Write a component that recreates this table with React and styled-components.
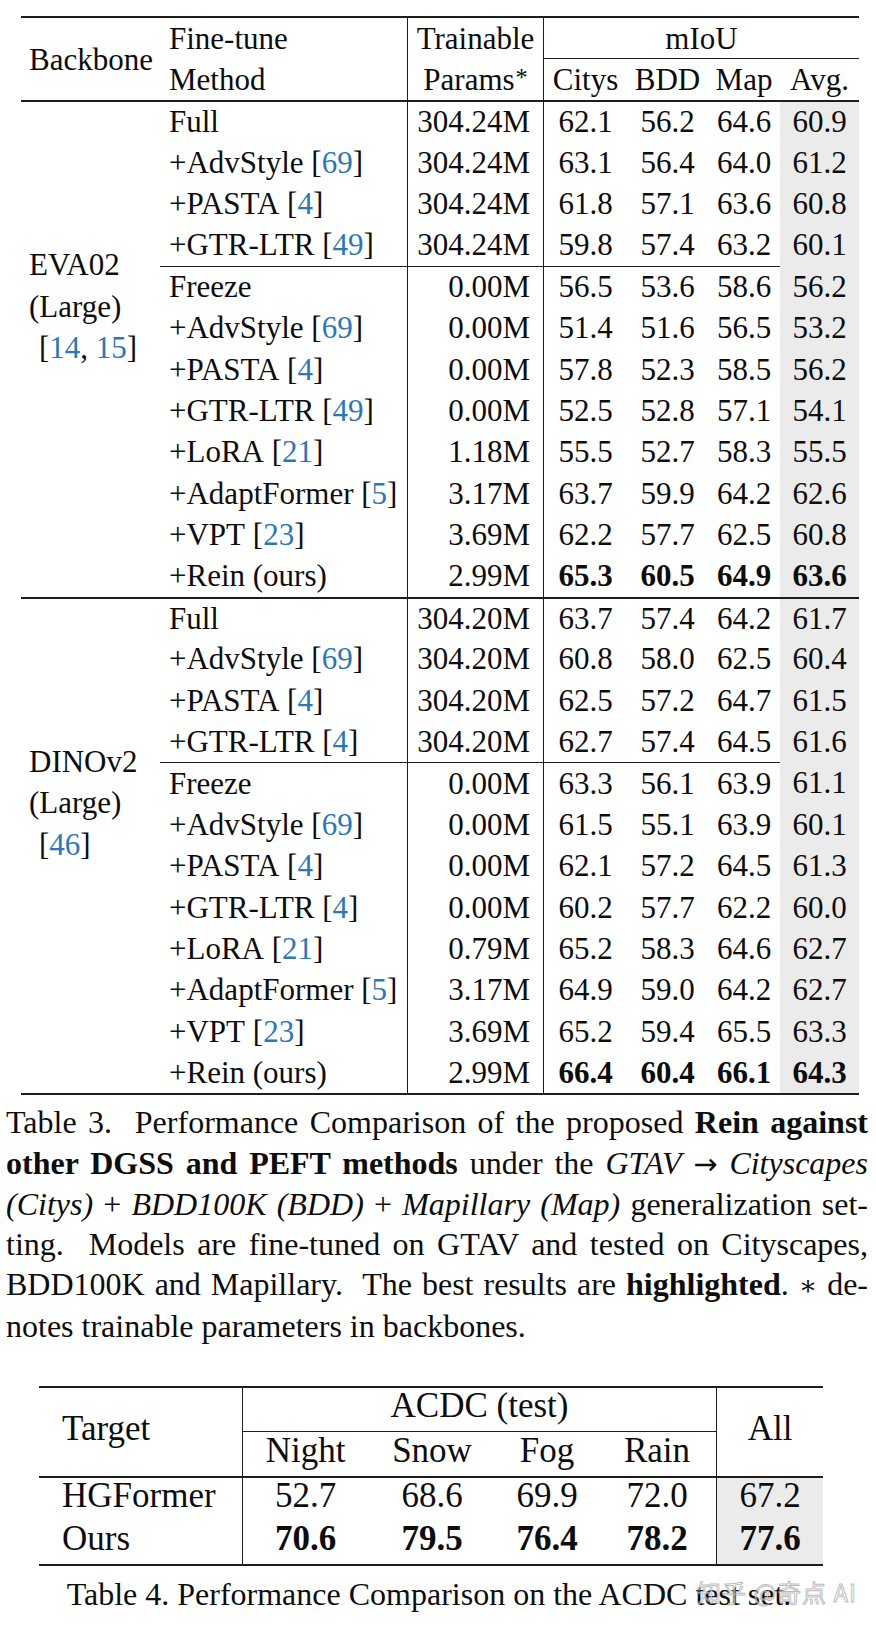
import React from 'react';
import styled, { createGlobalStyle, css } from 'styled-components';

const RULE = '#1e1e1e';
const SHADE = '#ebebeb';
const CITE = '#2c78b6';

const GlobalStyle = createGlobalStyle`
  html, body { margin: 0; padding: 0; background: #ffffff; }
  body {
    font-family: "Liberation Serif", "Times New Roman", serif;
    color: #0d0d0d;
  }
`;

const Page = styled.div`
  position: relative;
  width: 876px;
  min-height: 1630px;
  padding-top: 16px;
  box-sizing: border-box;
  overflow: hidden;
`;

/* ---------- Table 3 ---------- */

const ResultsTable = styled.div`
  display: grid;
  grid-template-columns: 139px 247px 136px 84px 81px 72px 79px;
  grid-template-rows: 41px 41px repeat(24, 41.4px);
  width: 838px;
  margin-left: 21px;
  border-top: 2px solid ${RULE};
  border-bottom: 2px solid ${RULE};
  font-size: 31px;
  line-height: 1;
`;

const BaseCell = styled.div`
  box-sizing: border-box;
  display: flex;
  align-items: center;
  white-space: nowrap;
  ${p => p.$rule === 'thick' && css`border-top: 2px solid ${RULE};`}
  ${p => p.$rule === 'thin' && css`border-top: 1px solid ${RULE};`}
  ${p => p.$vline && css`border-left: 1px solid ${RULE};`}
  ${p => p.$shade && css`background: ${SHADE};`}
  font-weight: ${p => (p.$bold ? 700 : 400)};
`;

const HeadCell = styled(BaseCell)`
  grid-column: ${p => p.$col};
  grid-row: ${p => p.$row};
  justify-content: ${p => (p.$left ? 'flex-start' : 'center')};
  padding-left: ${p => p.$pad || 0}px;
  ${p => p.$underline && css`border-bottom: 1px solid ${RULE};`}
`;

const Star = styled.sup`
  font-size: 0.78em;
  line-height: 0;
  position: relative;
  top: -0.05em;
  margin-left: 1px;
`;

const BackboneCell = styled(BaseCell)`
  grid-column: 1;
  grid-row: ${p => p.$start} / span 12;
  flex-direction: column;
  align-items: flex-start;
  justify-content: center;
  padding: 0 0 86px 8px;
`;

const BackboneLine = styled.div`
  line-height: 41.4px;
  margin-left: ${p => (p.$indent ? 10 : 0)}px;
`;

const MethodCell = styled(BaseCell)`
  padding-left: 9px;
`;

const ParamCell = styled(BaseCell)`
  justify-content: flex-end;
  padding-right: 13px;
  border-left: 1px solid ${RULE};
`;

const ScoreCell = styled(BaseCell)`
  justify-content: center;
`;

const Cite = styled.span`
  color: ${CITE};
`;

/* ---------- Captions ---------- */

const Caption = styled.div`
  margin: 7px 0 0 6px;
  width: 862px;
  font-size: 32px;
  line-height: 40.2px;
`;

const CaptionLine = styled.div`
  white-space: nowrap;
  text-align: ${p => (p.$last ? 'left' : 'justify')};
  text-align-last: ${p => (p.$last ? 'left' : 'justify')};
`;

const Strong = styled.b`
  font-weight: 700;
`;

const Em = styled.i`
  font-style: italic;
`;

const MathSym = styled.span`
  font-family: ${p => (p.$arrow ? '"DejaVu Sans", sans-serif' : '"DejaVu Serif", "Liberation Serif", serif')};
  font-size: ${p => (p.$arrow ? '0.9em' : '0.85em')};
`;

/* ---------- Table 4 ---------- */

const AcdcTable = styled.div`
  display: grid;
  grid-template-columns: 203px 126px 128px 102px 118px 107px;
  grid-template-rows: repeat(4, 44px);
  width: 784px;
  margin: 39px 0 0 39px;
  border-top: 2px solid ${RULE};
  border-bottom: 2px solid ${RULE};
  font-size: 35px;
  line-height: 1;
`;

const AcdcCell = styled(BaseCell)`
  justify-content: ${p => (p.$left ? 'flex-start' : 'center')};
  padding-left: ${p => (p.$left ? 23 : 0)}px;
  padding-bottom: 7px;
  ${p => p.$col && css`grid-column: ${p.$col};`}
  ${p => p.$row && css`grid-row: ${p.$row};`}
  ${p => p.$underline && css`border-bottom: 1px solid ${RULE};`}
`;

const SmallCaption = styled.div`
  position: relative;
  margin: 8px 0 0 37px;
  width: 784px;
  text-align: center;
  font-size: 32px;
  line-height: 40px;
`;

const Watermark = styled.div`
  position: absolute;
  left: 697px;
  top: 1577px;
  font-family: "Noto Sans CJK SC", "Noto Sans", sans-serif;
  font-size: 24px;
  line-height: 30px;
  letter-spacing: 1px;
  color: rgba(255, 255, 255, 0.6);
  -webkit-text-stroke: 1px rgba(120, 120, 120, 0.5);
  white-space: nowrap;
`;

/* ---------- Data ---------- */

const eva = [
  ['Full', null, '304.24M', ['62.1', '56.2', '64.6', '60.9']],
  ['+AdvStyle', '69', '304.24M', ['63.1', '56.4', '64.0', '61.2']],
  ['+PASTA', '4', '304.24M', ['61.8', '57.1', '63.6', '60.8']],
  ['+GTR-LTR', '49', '304.24M', ['59.8', '57.4', '63.2', '60.1']],
  ['Freeze', null, '0.00M', ['56.5', '53.6', '58.6', '56.2']],
  ['+AdvStyle', '69', '0.00M', ['51.4', '51.6', '56.5', '53.2']],
  ['+PASTA', '4', '0.00M', ['57.8', '52.3', '58.5', '56.2']],
  ['+GTR-LTR', '49', '0.00M', ['52.5', '52.8', '57.1', '54.1']],
  ['+LoRA', '21', '1.18M', ['55.5', '52.7', '58.3', '55.5']],
  ['+AdaptFormer', '5', '3.17M', ['63.7', '59.9', '64.2', '62.6']],
  ['+VPT', '23', '3.69M', ['62.2', '57.7', '62.5', '60.8']],
  ['+Rein (ours)', null, '2.99M', ['65.3', '60.5', '64.9', '63.6'], true],
];

const dino = [
  ['Full', null, '304.20M', ['63.7', '57.4', '64.2', '61.7']],
  ['+AdvStyle', '69', '304.20M', ['60.8', '58.0', '62.5', '60.4']],
  ['+PASTA', '4', '304.20M', ['62.5', '57.2', '64.7', '61.5']],
  ['+GTR-LTR', '4', '304.20M', ['62.7', '57.4', '64.5', '61.6']],
  ['Freeze', null, '0.00M', ['63.3', '56.1', '63.9', '61.1']],
  ['+AdvStyle', '69', '0.00M', ['61.5', '55.1', '63.9', '60.1']],
  ['+PASTA', '4', '0.00M', ['62.1', '57.2', '64.5', '61.3']],
  ['+GTR-LTR', '4', '0.00M', ['60.2', '57.7', '62.2', '60.0']],
  ['+LoRA', '21', '0.79M', ['65.2', '58.3', '64.6', '62.7']],
  ['+AdaptFormer', '5', '3.17M', ['64.9', '59.0', '64.2', '62.7']],
  ['+VPT', '23', '3.69M', ['65.2', '59.4', '65.5', '63.3']],
  ['+Rein (ours)', null, '2.99M', ['66.4', '60.4', '66.1', '64.3'], true],
];

const groups = [
  { start: 3, lines: ['EVA02', '(Large)'], cites: ['14', '15'], rows: eva },
  { start: 15, lines: ['DINOv2', '(Large)'], cites: ['46'], rows: dino },
];

function CiteList({ ids }) {
  return (
    <>
      [
      {ids.map((id, i) => (
        <React.Fragment key={id}>
          {i > 0 && ', '}
          <Cite>{id}</Cite>
        </React.Fragment>
      ))}
      ]
    </>
  );
}

function DataRow({ row, index }) {
  const [name, cite, params, scores, bold] = row;
  const rule = index === 0 ? 'thick' : index === 4 ? 'thin' : null;
  return (
    <>
      <MethodCell $rule={rule}>
        {name}
        {cite && (
          <>
            &nbsp;<CiteList ids={[cite]} />
          </>
        )}
      </MethodCell>
      <ParamCell $rule={rule}>{params}</ParamCell>
      {scores.map((s, i) => (
        <ScoreCell
          key={i}
          $rule={i === 3 ? (index === 0 ? 'thick' : null) : rule}
          $vline={i === 0}
          $shade={i === 3}
          $bold={bold}
        >
          {s}
        </ScoreCell>
      ))}
    </>
  );
}

const acdcRows = [
  ['HGFormer', ['52.7', '68.6', '69.9', '72.0'], '67.2', false],
  ['Ours', ['70.6', '79.5', '76.4', '78.2'], '77.6', true],
];

export default function App() {
  return (
    <Page>
      <GlobalStyle />
      <ResultsTable>
        <HeadCell $col="1" $row="1 / span 2" $left $pad={8}>Backbone</HeadCell>
        <HeadCell $col="2" $row="1" $left $pad={9}>Fine-tune</HeadCell>
        <HeadCell $col="2" $row="2" $left $pad={9}>Method</HeadCell>
        <HeadCell $col="3" $row="1" $vline>Trainable</HeadCell>
        <HeadCell $col="3" $row="2" $vline>
          Params<Star>*</Star>
        </HeadCell>
        <HeadCell $col="4 / span 4" $row="1" $vline $underline>mIoU</HeadCell>
        <HeadCell $col="4" $row="2" $vline>Citys</HeadCell>
        <HeadCell $col="5" $row="2">BDD</HeadCell>
        <HeadCell $col="6" $row="2">Map</HeadCell>
        <HeadCell $col="7" $row="2">Avg.</HeadCell>

        {groups.map(g => (
          <React.Fragment key={g.start}>
            <BackboneCell $start={g.start} $rule="thick">
              {g.lines.map(l => (
                <BackboneLine key={l}>{l}</BackboneLine>
              ))}
              <BackboneLine $indent>
                <CiteList ids={g.cites} />
              </BackboneLine>
            </BackboneCell>
            {g.rows.map((r, i) => (
              <DataRow key={i} row={r} index={i} />
            ))}
          </React.Fragment>
        ))}
      </ResultsTable>

      <Caption>
        <CaptionLine>
          Table 3.&nbsp; Performance Comparison of the proposed <Strong>Rein against</Strong>
        </CaptionLine>
        <CaptionLine>
          <Strong>other DGSS and PEFT methods</Strong> under the <Em>GTAV</Em> <MathSym $arrow>→</MathSym> <Em>Cityscapes</Em>
        </CaptionLine>
        <CaptionLine>
          <Em>(Citys)</Em> + <Em>BDD100K (BDD)</Em> + <Em>Mapillary (Map)</Em> generalization set-
        </CaptionLine>
        <CaptionLine>
          ting.&nbsp; Models are fine-tuned on GTAV and tested on Cityscapes,
        </CaptionLine>
        <CaptionLine>
          BDD100K and Mapillary.&nbsp; The best results are <Strong>highlighted</Strong>. <MathSym>∗</MathSym> de-
        </CaptionLine>
        <CaptionLine $last>notes trainable parameters in backbones.</CaptionLine>
      </Caption>

      <AcdcTable>
        <AcdcCell $col="1" $row="1 / span 2" $left>Target</AcdcCell>
        <AcdcCell $col="2 / span 4" $row="1" $vline $underline>ACDC (test)</AcdcCell>
        <AcdcCell $col="6" $row="1 / span 2" $vline>All</AcdcCell>
        <AcdcCell $col="2" $row="2" $vline>Night</AcdcCell>
        <AcdcCell $col="3" $row="2">Snow</AcdcCell>
        <AcdcCell $col="4" $row="2">Fog</AcdcCell>
        <AcdcCell $col="5" $row="2">Rain</AcdcCell>
        {acdcRows.map(([label, vals, all, bold], r) => (
          <React.Fragment key={label}>
            <AcdcCell $left $rule={r === 0 ? 'thick' : null}>{label}</AcdcCell>
            {vals.map((v, i) => (
              <AcdcCell key={i} $vline={i === 0} $bold={bold} $rule={r === 0 ? 'thick' : null}>
                {v}
              </AcdcCell>
            ))}
            <AcdcCell $vline $shade $bold={bold} $rule={r === 0 ? 'thick' : null}>
              {all}
            </AcdcCell>
          </React.Fragment>
        ))}
      </AcdcTable>

      <SmallCaption>Table 4. Performance Comparison on the ACDC test set.</SmallCaption>
      <Watermark>知乎 @奇点 AI</Watermark>
    </Page>
  );
}
